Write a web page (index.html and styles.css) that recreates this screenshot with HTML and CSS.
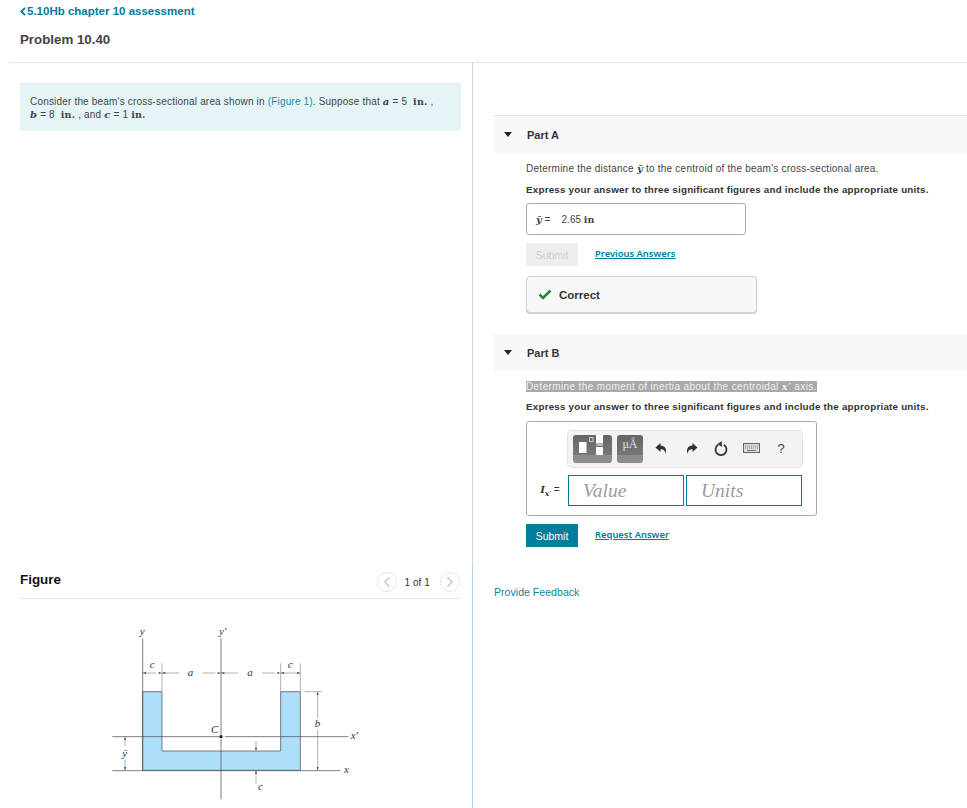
FILE: index.html
```html
<!DOCTYPE html>
<html lang="en">
<head>
<meta charset="utf-8">
<title>Problem 10.40</title>
<link rel="stylesheet" href="styles.css">
</head>
<body>
<header class="top">
  <a class="back" href="#"><svg class="back-icon" width="6" height="9" viewBox="0 0 6 9"><path d="M5 .8 1.300 4.500 5 8.200" fill="none" stroke="#007c9c" stroke-width="1.800"/></svg>5.10Hb chapter 10 assessment</a>
  <h1 class="title">Problem 10.40</h1>
</header>
<main class="main">
  <section class="left">
    <div class="intro">Consider the beam's cross-sectional area shown in <a class="plain-link" href="#">(Figure 1)</a>. Suppose that <b class="mv">a</b> = 5 &nbsp;<b class="mu">in.</b> ,<br><b class="mv">b</b> = 8 &nbsp;<b class="mu">in.</b> , and <b class="mv">c</b> = 1 <b class="mu">in.</b></div>
    <div class="fig-head">
      <h2 class="fig-title">Figure</h2>
      <div class="pager">
        <span class="page-btn"><svg width="8" height="12" viewBox="0 0 8 12"><path d="M6.500 1.500 2 6l4.500 4.500" fill="none" stroke="#c4c8cc" stroke-width="1.500"/></svg></span>
        <span class="page-num">1 of 1</span>
        <span class="page-btn"><svg width="8" height="12" viewBox="0 0 8 12"><path d="M1.500 1.500 6 6l-4.500 4.500" fill="none" stroke="#c4c8cc" stroke-width="1.500"/></svg></span>
      </div>
    </div>
    <svg class="figure" width="270" height="188" viewBox="0 0 810 564">
      <path d="M128 215H186V393H542V215H601V451H128Z" fill="#addffa"/>
      <g fill="none" stroke="#4a4f55" stroke-width="2.200">
        <path d="M128 215H186V393H542V215H601V451H128Z"/>
        <path d="M128 55V451M363 55V345M363 357V538"/>
        <path d="M37 350H358M375 350H745M37 452H722"/>
      </g>
      <g fill="none" stroke="#5c6166" stroke-width="1.500">
        <path d="M186 130V215M542 130V215M601 130V215"/>
        <path d="M128 159H168M186 159H238M308 159H346M363 159H415M486 159H524M542 159H601"/>
        <path d="M613 215H666M653 215V296M653 328V451"/>
        <path d="M75 350V378M75 420V451"/>
        <path d="M468 362V393M468 451V490"/>
      </g>
      <g fill="#444a50">
        <path d="M128 159l10-3v6ZM186 159l-10-3v6ZM186 159l10-3v6ZM363 159l-10-3v6ZM363 159l10-3v6ZM542 159l-10-3v6ZM542 159l10-3v6ZM601 159l-10-3v6Z"/>
        <path d="M653 215l-3 10h6ZM653 451l-3-10h6ZM75 350l-3 10h6ZM75 451l-3-10h6ZM468 393l-3-10h6ZM468 451l-3 10h6Z"/>
      </g>
      <circle cx="363" cy="350" r="5" fill="#222"/>
      <g class="fig-label">
        <text x="119" y="46">y</text>
        <text x="357" y="46">y′</text>
        <text x="149" y="145">c</text>
        <text x="263" y="167">a</text>
        <text x="442" y="167">a</text>
        <text x="563" y="145">c</text>
        <text x="644" y="321">b</text>
        <text x="333" y="338">C</text>
        <text x="752" y="358">x′</text>
        <text x="732" y="458">x</text>
        <text x="474" y="511">c</text>
        <text x="67" y="410">ȳ</text>
      </g>
    </svg>
  </section>
  <section class="right">
    <div class="part part-a">
      <div class="part-head"><span class="caret"></span><h2 class="part-title">Part A</h2></div>
      <div class="part-body">
        <p class="q">Determine the distance <b class="mv">ȳ</b> to the centroid of the beam's cross-sectional area.</p>
        <p class="q strong">Express your answer to three significant figures and include the appropriate units.</p>
        <div class="answer-box"><span><b class="mv">ȳ</b> = &nbsp;&nbsp;&nbsp;2.65 <b class="mu">in</b></span></div>
        <div class="actions">
          <button class="btn btn-off" type="button">Submit</button>
          <a class="act-link" href="#">Previous Answers</a>
        </div>
        <div class="correct">
          <svg width="14" height="11" viewBox="0 0 14 11"><path d="M1.500 5.500 5 9 12.500 1.500" fill="none" stroke="#1c8a3c" stroke-width="2.600"/></svg>
          <span>Correct</span>
        </div>
      </div>
    </div>
    <div class="part part-b">
      <div class="part-head"><span class="caret"></span><h2 class="part-title">Part B</h2></div>
      <div class="part-body">
        <p class="q"><span class="sel">Determine the moment of inertia about the centroidal <b class="mv">x′</b> axis.</span></p>
        <p class="q strong">Express your answer to three significant figures and include the appropriate units.</p>
        <div class="editor">
          <div class="toolbar">
            <span class="tool tool-wide">
              <svg width="39" height="28" viewBox="0 0 39 28"><rect x="6" y="7" width="7.500" height="11" fill="#fff"/><rect x="16.500" y="2.500" width="3.500" height="4" fill="none" stroke="#ccc"/><rect x="23" y="0" width="7" height="8.500" fill="#fff"/><rect x="23" y="9.500" width="7" height="1" fill="#fff"/><rect x="23" y="12" width="7" height="8" fill="#fff"/></svg>
            </span>
            <span class="tool tool-unit">μÅ</span>
            <span class="cell"><svg width="13" height="13" viewBox="0 0 13 13"><path d="M5.500 1 .5 5.500l5 4.500V7.200c3 0 4.500 1.300 5 4.800 1.500-5-.5-8.500-5-8.500Z" fill="#333"/></svg></span>
            <span class="cell"><svg width="13" height="13" viewBox="0 0 13 13"><path d="M7.500 1l5 4.500-5 4.500V7.200c-3 0-4.500 1.300-5 4.800-1.500-5 .5-8.500 5-8.500Z" fill="#333"/></svg></span>
            <span class="cell"><svg width="14" height="15" viewBox="0 0 14 15"><path d="M4.300 3.800A5.500 5.500 0 1 0 9.700 3.800" fill="none" stroke="#333" stroke-width="1.800"/><path d="M7.800 0v6L3.500 3Z" fill="#333"/></svg></span>
            <span class="cell"><svg width="17" height="10" viewBox="0 0 17 10"><rect x=".5" y=".5" width="16" height="9" fill="#ddd" stroke="#666"/><path d="M2 3h13M2 5h13" stroke="#777" stroke-dasharray="1 1"/><path d="M4 7.500h9" stroke="#777"/></svg></span>
            <span class="cell tool-help">?</span>
          </div>
          <div class="input-row">
            <span class="input-label"><b class="mv">I<sub>x′</sub></b> =</span>
            <input class="field" type="text" placeholder="Value">
            <input class="field" type="text" placeholder="Units">
          </div>
        </div>
        <div class="actions">
          <button class="btn btn-on" type="button">Submit</button>
          <a class="act-link" href="#">Request Answer</a>
        </div>
      </div>
    </div>
    <a class="feedback" href="#">Provide Feedback</a>
  </section>
</main>
</body>
</html>
```
FILE: styles.css
```css
* { box-sizing: border-box; }
html, body { margin: 0; padding: 0; }
body {
  font-family: "Liberation Sans", Arial, sans-serif;
  font-size: 11px;
  color: #333;
  background: #fff;
  height: 808px;
  overflow: hidden;
}
a { text-decoration: none; }
.top { height: 63px; margin-left: 9px; border-bottom: 1px solid #dfe2e6; padding: 4px 0 0 11px; }
.back { display: flex; align-items: center; gap: 1px; color: #007c9c; font-weight: bold; font-size: 11.5px; line-height: 14px; }
.title { margin: 14px 0 0; font-size: 13.3px; line-height: 16px; font-weight: bold; color: #444; }
.main { display: grid; grid-template-columns: 473px 1fr; height: 745px; }
.left { border-right: 1px solid; border-image: linear-gradient(#c9d8e6 0 503px, #b4cde2 503px) 1; padding: 20px 11px 0 20px; }
.intro { height: 48px; background: #e5f5f7; border-top: 1px solid #dfeaee; padding: 11px 10px 0; line-height: 13px; font-size: 10px; letter-spacing: .18px; color: #444; }
.plain-link { color: #1a8aa8; }
.mv { font-family: "DejaVu Serif", serif; font-style: italic; font-weight: bold; font-size: 10px; }
.mu { font-family: "DejaVu Serif", serif; font-weight: bold; font-size: 9.5px; }
.fig-head { display: flex; justify-content: space-between; align-items: center; height: 36px; margin: 432px 1px 0 0; border-bottom: 1px solid #dfe2e6; }
.fig-title { margin: 0 0 3px; font-size: 13.4px; font-weight: bold; color: #111; }
.pager { display: flex; align-items: center; gap: 7px; margin-top: 3px; }
.page-btn { width: 20px; height: 20px; border: 1px solid #e4e6e8; border-radius: 50%; display: flex; align-items: center; justify-content: center; }
.page-num { font-size: 10px; letter-spacing: .1px; color: #333; margin-right: 3px; }
.figure { display: block; margin: 21px 0 0 80px; }
.fig-label text { font-family: "Liberation Serif", serif; font-style: italic; font-size: 33px; fill: #333; }
.right { padding: 52px 0 0 21px; min-width: 0; }
.part-head { display: flex; align-items: center; height: 38px; background: #f8f8f8; border-top: 1px solid #e6e6e6; padding-left: 10px; }
.part-b .part-head { height: 37px; border-top: 0; }
.caret { width: 0; height: 0; border-left: 4px solid transparent; border-right: 4px solid transparent; border-top: 5px solid #222; }
.part-title { margin: 0 0 0 15px; font-size: 11px; font-weight: bold; color: #333; }
.part-body { padding: 9px 0 0 32px; }
.q { margin: 0 0 7px; line-height: 14px; font-size: 10px; letter-spacing: .23px; color: #444; }
.part-b .q { margin-bottom: 6px; }
.q.strong { font-weight: bold; color: #333; font-size: 9.8px; letter-spacing: .22px; }
.part-a .q.strong { margin-bottom: 6px; }
.sel { background: #a9a9a9; color: #f0f0f0; letter-spacing: .37px; }
.answer-box { width: 220px; height: 32px; border: 1px solid #aaa; border-radius: 3px; padding: 0 9px; display: flex; align-items: center; font-size: 10px; color: #444; }
.actions { display: flex; align-items: center; gap: 17px; margin-top: 8px; }
.btn { width: 52px; height: 23px; border: 0; padding: 0; font: 10.5px "Liberation Sans", Arial, sans-serif; }
.btn-off { background: #eee; color: #ccc; }
.btn-on { background: #007c9c; color: #fff; }
.act-link { font-family: "Noto Sans", sans-serif; font-size: 9.4px; font-weight: 600; color: #007c9c; text-decoration: underline; margin-top: -3px; }
.correct { display: flex; align-items: center; gap: 7px; width: 231px; height: 37px; margin-top: 10px; padding-left: 11px; background: #f8f8f8; border: 1px solid #d0d0d0; border-radius: 4px; box-shadow: 0 1px 1px #ccc; font-size: 11.5px; font-weight: bold; color: #333; }
.part-b { margin-top: 21px; }
.editor { width: 291px; height: 95px; margin-top: 7px; border: 1px solid #aaa; border-radius: 3px; padding: 8px 13px 0 40px; }
.toolbar { display: flex; align-items: center; height: 38px; border: 1px solid #e2e2e2; border-radius: 5px; background: #f3f3f3; padding-left: 5px; }
.tool { height: 28px; border-radius: 3px; background: linear-gradient(#666 0, #777 72%, #8c8c90 72%); color: #e2e2e2; display: flex; justify-content: center; }
.tool-wide { width: 39px; margin-right: 5px; }
.tool-unit { width: 26px; margin-right: 3px; font: 12px/18px "Liberation Serif", serif; }
.cell { width: 30px; display: flex; justify-content: center; align-items: center; margin-top: -2px; }
.tool-help { font-size: 13px; color: #444; }
.input-row { display: flex; align-items: center; gap: 2px; margin-top: 7px; margin-left: -32px; }
.input-label { width: 30px; text-align: center; font-size: 10px; margin-right: 1px; color: #333; white-space: nowrap; }
.input-label sub { font-size: 7px; }
.field { width: 116px; height: 31px; border: 1px solid #007c9c; padding: 0 14px; font: italic 19.5px "Liberation Serif", serif; background: #fff; min-width: 0; }
.field::placeholder { color: #9b9b9b; opacity: 1; }
.feedback { display: block; margin-top: 39px; font-size: 10.6px; color: #1a7f9c; }
```
